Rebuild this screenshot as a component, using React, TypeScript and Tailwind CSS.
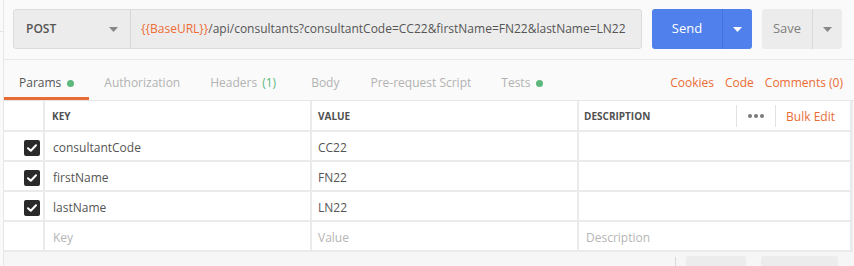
import React from 'react';

const Caret = ({ color }: { color: string }) => (
  <svg width="9" height="5" viewBox="0 0 9 5" className="block">
    <path d="M0 0 L9 0 L4.5 5 Z" fill={color} />
  </svg>
);

const Check = () => (
  <div className="w-4 h-4 rounded-[2px] bg-[#2a2a2a] flex items-center justify-center">
    <svg width="10" height="8" viewBox="0 0 10 8">
      <path d="M1 4.2 L3.8 6.8 L9 1.2" stroke="#fff" strokeWidth="2" fill="none" strokeLinecap="round" strokeLinejoin="round" />
    </svg>
  </div>
);

const rows = [
  { key: 'consultantCode', value: 'CC22' },
  { key: 'firstName', value: 'FN22' },
  { key: 'lastName', value: 'LN22' },
];

export default function App() {
  return (
    <div className="w-[854px] h-[266px] overflow-hidden bg-[#fafafa] flex font-['Open_Sans',sans-serif]">
      {/* neighbour pane edge */}
      <div className="w-[3px] shrink-0 pt-[31px]">
        <div className="h-px bg-[#e2e2e2]" />
      </div>

      <div className="flex-1 flex flex-col border-l border-[#e6e6e6]">
        {/* request bar */}
        <div className="flex items-start pl-[9px] pt-[9px] h-[60px] shrink-0 border-b border-[#e8e8e8]">
          <div className="flex h-10 w-[629px] rounded-[3px] border border-[#dcdcdc] bg-[#ececec]">
            <div className="w-[117px] flex items-center justify-between pl-3 pr-[12px] border-r border-[#d6d6d6]">
              <span className="text-[12px] font-semibold text-[#555]">POST</span>
              <Caret color="#888" />
            </div>
            <div className="flex-1 flex items-center pl-[10px] text-[12px] text-[#555] whitespace-nowrap overflow-hidden">
              <span className="text-[#ee6d36]">{'{{BaseURL}}'}</span>
              <span>/api/consultants?consultantCode=CC22&amp;firstName=FN22&amp;lastName=LN22</span>
            </div>
          </div>
          <div className="ml-[10px] flex h-10 w-[100px] rounded-[3px] bg-[#5080eb]">
            <div className="w-[70px] flex items-center justify-center text-white text-[13px]">Send</div>
            <div className="flex-1 flex items-center justify-center border-l border-[#4672d8]">
              <Caret color="#fff" />
            </div>
          </div>
          <div className="ml-[10px] flex h-10 w-[80px] rounded-[3px] bg-[#ececec]">
            <div className="w-[50px] flex items-center justify-center text-[#7f7f7f] text-[13px]">Save</div>
            <div className="flex-1 flex items-center justify-center border-l border-[#dadada]">
              <Caret color="#888" />
            </div>
          </div>
        </div>

        {/* tabs */}
        <div className="flex items-stretch h-[41px] shrink-0 border-b border-[#e6e6e6] text-[12px]">
          <div className="flex items-center px-[15px] pt-[9px] text-[#555] border-b-[3px] border-[#ea6c35]">
            Params
            <span className="ml-[6px] w-[7px] h-[7px] rounded-full bg-[#5cb87d]" />
          </div>
          <div className="flex items-center px-[15px] pb-[3px] pt-[9px] text-[#b2b2b2]">Authorization</div>
          <div className="flex items-center px-[15px] pb-[3px] pt-[9px] text-[#b2b2b2]">
            Headers<span className="ml-[5px] text-[#5cb87d]">(1)</span>
          </div>
          <div className="flex items-center pl-[20px] pr-[16px] pb-[3px] pt-[9px] text-[#b2b2b2]">Body</div>
          <div className="flex items-center px-[15px] pb-[3px] pt-[9px] text-[#b2b2b2]">Pre-request Script</div>
          <div className="flex items-center px-[15px] pb-[3px] pt-[9px] text-[#b2b2b2]">
            Tests
            <span className="ml-[6px] w-[7px] h-[7px] rounded-full bg-[#5cb87d]" />
          </div>
          <div className="ml-auto flex items-center gap-[11px] pr-[11px] pb-[3px] pt-[9px] text-[#ea6c35]">
            <span>Cookies</span>
            <span>Code</span>
            <span>Comments (0)</span>
          </div>
        </div>

        {/* params table */}
        <div className="bg-[#ebebeb] w-[849px] shrink-0 grid grid-cols-[39px_265px_265px_271px] gap-[2px] pr-[2px] pb-[2px]">
          <div className="bg-white h-[29px]" />
          <div className="bg-white h-[29px] flex items-center pl-[7px] pt-[2px] text-[10px] font-bold text-[#505050]">KEY</div>
          <div className="bg-white h-[29px] flex items-center pl-[6px] pt-[2px] text-[10px] font-bold text-[#505050]">VALUE</div>
          <div className="bg-white h-[29px] flex items-center pl-[5px] text-[10px] font-bold text-[#505050]">
            <span className="pt-[2px]">DESCRIPTION</span>
            <div className="ml-auto flex items-center h-[22px] text-[12px]">
              <div className="w-px h-[22px] bg-[#e2e2e2]" />
              <div className="flex gap-[2px] px-[11px]">
                <span className="w-[4px] h-[4px] rounded-full bg-[#7a7a7a]" />
                <span className="w-[4px] h-[4px] rounded-full bg-[#7a7a7a]" />
                <span className="w-[4px] h-[4px] rounded-full bg-[#7a7a7a]" />
              </div>
              <div className="w-px h-[22px] bg-[#e2e2e2]" />
              <span className="pl-[10px] pr-[15px] pt-[2px] font-normal text-[#ea6c35]">Bulk Edit</span>
            </div>
          </div>

          {rows.map((r) => (
            <React.Fragment key={r.key}>
              <div className="bg-white h-[28px] flex items-center pl-[20px] pt-[3px]">
                <Check />
              </div>
              <div className="bg-white h-[28px] flex items-center pl-[8px] pt-[3px] text-[12px] text-[#555]">{r.key}</div>
              <div className="bg-white h-[28px] flex items-center pl-[6px] pt-[3px] text-[12px] text-[#555]">{r.value}</div>
              <div className="bg-white h-[28px]" />
            </React.Fragment>
          ))}

          <div className="bg-white h-[28px]" />
          <div className="bg-white h-[28px] flex items-center pl-[8px] pt-[3px] text-[12px] text-[#b5b5b5]">Key</div>
          <div className="bg-white h-[28px] flex items-center pl-[6px] pt-[3px] text-[12px] text-[#b5b5b5]">Value</div>
          <div className="bg-white h-[28px] flex items-center pl-[7px] pt-[3px] text-[12px] text-[#b5b5b5]">Description</div>
        </div>

        {/* footer hints */}
        <div className="flex items-end flex-1 bg-[#f6f6f6]">
          <div className="ml-[671px] w-px h-[9px] bg-[#d8d8d8]" />
          <div className="ml-[10px] w-[60px] h-[10px] rounded-t-[3px] bg-[#ececec]" />
          <div className="ml-[15px] w-[77px] h-[10px] rounded-t-[3px] bg-[#ececec]" />
        </div>
      </div>
    </div>
  );
}
